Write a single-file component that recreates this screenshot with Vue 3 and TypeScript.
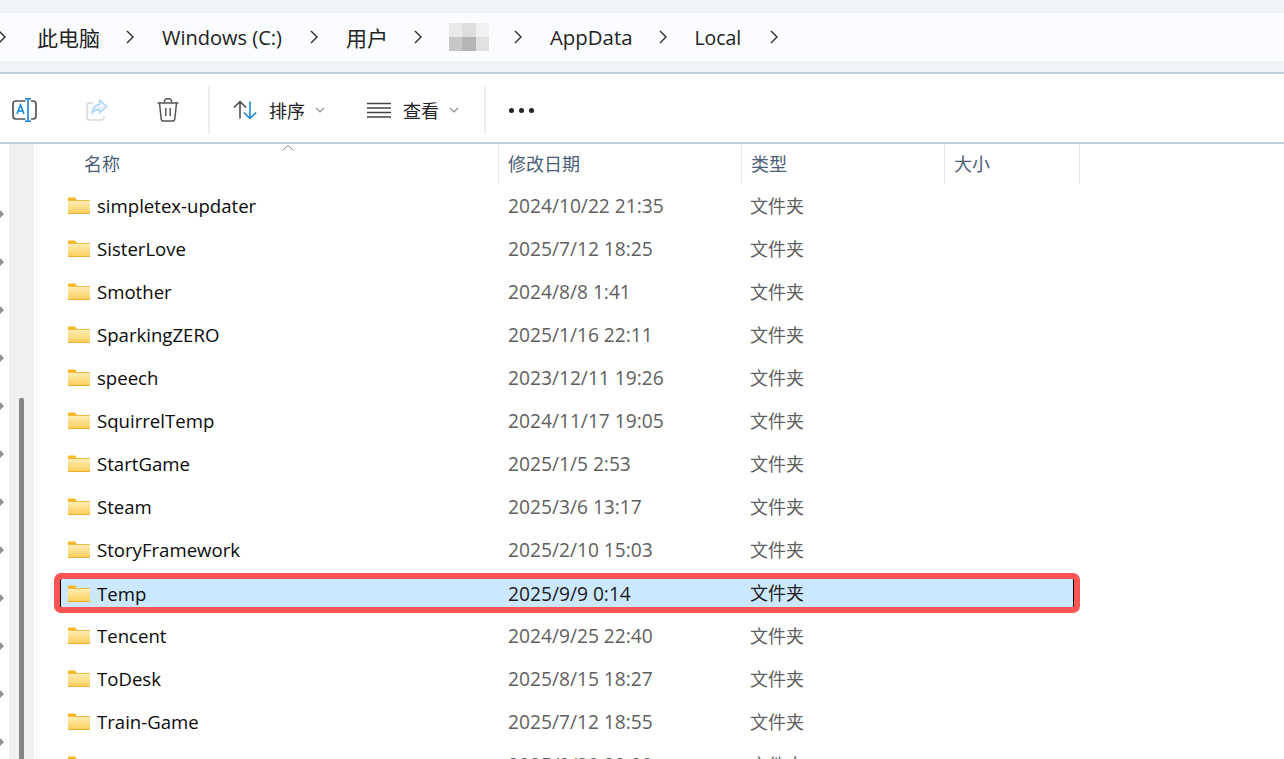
<script setup lang="ts">
interface FileRow {
  name: string
  date: string
  selected?: boolean
}

// last row is cut by the window edge, its name can't be read in the reference
const rows: FileRow[] = [
  { name: 'simpletex-updater', date: '2024/10/22 21:35' },
  { name: 'SisterLove', date: '2025/7/12 18:25' },
  { name: 'Smother', date: '2024/8/8 1:41' },
  { name: 'SparkingZERO', date: '2025/1/16 22:11' },
  { name: 'speech', date: '2023/12/11 19:26' },
  { name: 'SquirrelTemp', date: '2024/11/17 19:05' },
  { name: 'StartGame', date: '2025/1/5 2:53' },
  { name: 'Steam', date: '2025/3/6 13:17' },
  { name: 'StoryFramework', date: '2025/2/10 15:03' },
  { name: 'Temp', date: '2025/9/9 0:14', selected: true },
  { name: 'Tencent', date: '2024/9/25 22:40' },
  { name: 'ToDesk', date: '2025/8/15 18:27' },
  { name: 'Train-Game', date: '2025/7/12 18:55' },
  { name: '', date: '2025/8/28 22:00' }
]

const mosaic: string[] = ['#e9e9e9', '#dedede', '#f1f1f1', '#c8c8c8', '#b5b5b5', '#e1e1e1']
const treeArrows: number[] = [0, 1, 2, 3, 4, 5, 6, 7, 8, 9, 10, 11, 12]
</script>

<template>
  <div class="explorer">
    <div class="address-band">
      <nav class="crumbs">
        <svg class="chev first" viewBox="0 0 8 14"><path d="M1 1l6 6-6 6" /></svg>
        <span class="crumb cjk c-pc">此电脑</span>
        <svg class="chev" viewBox="0 0 8 14"><path d="M1 1l6 6-6 6" /></svg>
        <span class="crumb c-win">Windows (C:)</span>
        <svg class="chev" viewBox="0 0 8 14"><path d="M1 1l6 6-6 6" /></svg>
        <span class="crumb cjk c-users">用户</span>
        <svg class="chev" viewBox="0 0 8 14"><path d="M1 1l6 6-6 6" /></svg>
        <div class="mosaic">
          <i v-for="(c, i) in mosaic" :key="i" :style="{ background: c }"></i>
        </div>
        <svg class="chev" viewBox="0 0 8 14"><path d="M1 1l6 6-6 6" /></svg>
        <span class="crumb c-app">AppData</span>
        <svg class="chev" viewBox="0 0 8 14"><path d="M1 1l6 6-6 6" /></svg>
        <span class="crumb c-local">Local</span>
        <svg class="chev" viewBox="0 0 8 14"><path d="M1 1l6 6-6 6" /></svg>
      </nav>
    </div>

    <div class="toolbar">
      <svg class="tool t-rename" viewBox="0 0 25 24" fill="none">
        <path d="M13.500 3H4a3 3 0 0 0-3 3v12a3 3 0 0 0 3 3h9.500" stroke="#565656" stroke-width="1.700" />
        <path d="M19 3h2a3 3 0 0 1 3 3v12a3 3 0 0 1-3 3h-2" stroke="#565656" stroke-width="1.700" />
        <path d="M16 1v22M13 .8h6M13 23.200h6" stroke="#1583d8" stroke-width="1.600" />
        <path d="M5 16 8.500 7l3.500 9M6.200 13h4.600" stroke="#1583d8" stroke-width="1.600" />
      </svg>
      <svg class="tool t-share" viewBox="0 0 22 22" fill="none">
        <path d="M7 4H3.500A2.500 2.500 0 0 0 1 6.500v12A2.500 2.500 0 0 0 3.500 21h12a2.500 2.500 0 0 0 2.500-2.500V17" stroke="#d8d8d8" stroke-width="1.500" />
        <path d="M13.500 1 21 7.500 13.500 14v-3.500c-3.500 0-5.500 1-7.500 4 .5-5 3-8.500 7.500-9.500z" fill="#e6f3fd" stroke="#a9d4f5" stroke-width="1.300" stroke-linejoin="round" />
      </svg>
      <svg class="tool t-trash" viewBox="0 0 22 24" fill="none" stroke="#565656" stroke-width="1.500">
        <path d="M.5 5h21M7.500 5V3a2.200 2.200 0 0 1 2.200-2.200h2.600A2.200 2.200 0 0 1 14.500 3v2" />
        <path d="M2.500 5l1.700 15.800A2.500 2.500 0 0 0 6.700 23h8.600a2.500 2.500 0 0 0 2.500-2.200L19.500 5" />
        <path d="M8.800 10v8M13.200 10v8" />
      </svg>
      <span class="vsep s-a"></span>
      <svg class="tool t-sort" viewBox="0 0 24 20" fill="none" stroke-width="1.500">
        <path d="M7 18.500V1.500M.8 7.500 7 1.500l6.200 6" stroke="#444" />
        <path d="M17 1.500v17M10.800 12.500l6.200 6 6.200-6" stroke="#1583d8" />
      </svg>
      <span class="tool-label l-sort">排序</span>
      <svg class="caret c-sort" viewBox="0 0 10 6"><path d="M1 1l4 4 4-4" /></svg>
      <svg class="tool t-view" viewBox="0 0 24 16" fill="none" stroke="#444" stroke-width="1.300">
        <path d="M0 1.500h24M0 6h24M0 10.500h24M0 15h24" />
      </svg>
      <span class="tool-label l-view">查看</span>
      <svg class="caret c-view" viewBox="0 0 10 6"><path d="M1 1l4 4 4-4" /></svg>
      <span class="vsep s-b"></span>
      <div class="dots"><i></i><i></i><i></i></div>
    </div>

    <div class="content">
      <aside class="tree">
        <div class="tree-arrows">
          <i v-for="n in treeArrows" :key="n"></i>
        </div>
        <div class="track"><div class="thumb"></div></div>
      </aside>

      <section class="files">
        <header class="col-head">
          <div class="col c-name">名称<svg class="sort-up" viewBox="0 0 12 6"><path d="M0.500 5.500 6 0.500l5.500 5" /></svg></div>
          <div class="col">修改日期</div>
          <div class="col">类型</div>
          <div class="col">大小</div>
        </header>
        <div class="list">
          <div v-for="row in rows" :key="row.date" class="row" :class="{ selected: row.selected }">
            <div class="row-inner">
              <div class="cell-name">
                <svg class="folder" viewBox="0 0 22 17">
                  <path d="M0 1.500A1 1 0 0 1 1 .500h6l2 2.500H0z" fill="#fbb81f" />
                  <path d="M0 3h22v14H0z" fill="#eeaf2e" />
                  <path d="M0 3.800h22V16H0z" fill="url(#fold)" />
                  <defs>
                    <linearGradient id="fold" x1="0" y1="0" x2="0" y2="1">
                      <stop offset="0" stop-color="#ffeeb4" />
                      <stop offset="1" stop-color="#fdd05f" />
                    </linearGradient>
                  </defs>
                </svg>
                <span class="fname">{{ row.name }}</span>
              </div>
              <div class="cell-date">{{ row.date }}</div>
              <div class="cell-type">文件夹</div>
            </div>
          </div>
        </div>
      </section>
    </div>
  </div>
</template>

<style>
html, body {
  margin: 0;
  height: 100%;
  overflow: hidden;
  background: #fff;
}
</style>

<style scoped>
.explorer {
  width: 1284px;
  height: 759px;
  overflow: hidden;
  display: flex;
  flex-direction: column;
  font-family: "Open Sans", "Noto Sans CJK SC", sans-serif;
  color: #1c1c1c;
}

.address-band {
  flex: none;
  box-sizing: border-box;
  padding: 13px 0 11px;
  background: #f0f4f9;
  border-bottom: 2px solid #c2cfdb;
  height: 74px;
}

.crumbs {
  height: 48px;
  background: #fafcff;
  display: flex;
  align-items: center;
  font-size: 20px;
  color: #222;
}

.chev {
  width: 8px;
  height: 14px;
  flex: none;
  fill: none;
  stroke: #2b2b2b;
  stroke-width: 1.400;
}

.chev.first {
  margin-left: -2px;
}

.crumb {
  white-space: nowrap;
}

.cjk {
  font-size: 21px;
}

.c-pc { margin: 0 26px 0 31px; }
.c-win { margin: 0 28px 0 28px; }
.c-users { margin: 0 26px 0 28px; }
.c-app { margin: 0 26px 0 28px; font-size: 20.400px; }
.c-local { margin: 0 29px 0 28px; font-size: 19.400px; }

.mosaic {
  width: 40px;
  height: 28px;
  margin: 0 25px 0 27px;
  display: grid;
  grid-template-columns: repeat(3, 1fr);
  grid-template-rows: repeat(2, 1fr);
  filter: blur(0.300px);
}

.toolbar {
  height: 68px;
  flex: none;
  box-sizing: border-box;
  padding-top: 4px;
  display: flex;
  align-items: center;
  background: #fff;
}

.tool {
  flex: none;
  display: block;
}

.t-rename { width: 25px; height: 24px; margin-left: 12px; }
.t-share { width: 22px; height: 22px; margin-left: 49px; }
.t-trash { width: 22px; height: 24px; margin-left: 49px; }

.vsep {
  width: 2px;
  height: 48px;
  background: #eeeeee;
  flex: none;
}

.s-a { margin-left: 29px; }
.s-b { margin-left: 25px; }

.t-sort { width: 24px; height: 20px; margin-left: 23px; }
.t-view { width: 24px; height: 16px; margin-left: 42px; }

.tool-label {
  font-size: 18px;
  color: #222;
  margin-left: 12px;
}

.caret {
  width: 10px;
  height: 6px;
  margin-left: 10px;
  flex: none;
  fill: none;
  stroke: #8a8a8a;
  stroke-width: 1.100;
}

.dots {
  display: flex;
  gap: 5px;
  margin-left: 23px;
}

.dots i {
  width: 5px;
  height: 5px;
  border-radius: 50%;
  background: #222;
}

.content {
  flex: 1;
  min-height: 0;
  display: flex;
  border-top: 2px solid #c2cfdb;
}

.tree {
  width: 36px;
  flex: none;
  box-sizing: border-box;
  display: flex;
}

.tree-arrows {
  width: 9px;
  flex: none;
  display: flex;
  flex-direction: column;
  gap: 40px;
  padding-top: 66px;
}

.tree-arrows i {
  display: block;
  width: 4px;
  height: 8px;
  flex: none;
  background: #8c9296;
  clip-path: polygon(0 0, 100% 50%, 0 100%);
}

.track {
  width: 25px;
  height: 100%;
  background: #f0f0f0;
  flex: none;
  padding-top: 254px;
  box-sizing: border-box;
  padding-left: 10px;
}

.thumb {
  width: 5px;
  height: 100%;
  background: #858585;
  border-radius: 2px 2px 0 0;
}

.files {
  flex: 1;
  min-width: 0;
  border-left: 1px solid #f2f2f2;
}

.col-head {
  display: grid;
  grid-template-columns: 462px 243px 203px 135px;
  height: 40px;
  font-size: 18px;
  line-height: 1;
  color: #4a6078;
}

.col {
  position: relative;
  display: flex;
  align-items: center;
  padding-left: 9px;
  border-right: 1px solid #e5e5e5;
}

.c-name {
  padding-left: 47px;
}

.sort-up {
  position: absolute;
  left: 245px;
  top: 1px;
  width: 12px;
  height: 6px;
  fill: none;
  stroke: #7c7c7c;
  stroke-width: 1;
}

.list {
  width: 1043px;
}

.row {
  height: 43px;
  padding-left: 17px;
  box-sizing: border-box;
}

.row-inner {
  height: 43px;
  display: grid;
  grid-template-columns: 444px 243px 1fr;
  align-items: center;
  font-size: 19.200px;
  box-sizing: border-box;
}

.row.selected {
  padding-top: 8px;
}

.row.selected .row-inner {
  background: #cce8ff;
  height: 28px;
  margin: 0 6px;
  padding-bottom: 2px;
  grid-template-columns: 438px 243px 1fr;
  box-shadow: inset 1px 0 0 #000, inset -1px 0 0 #000;
  outline: 6px solid #ff5454;
  border-radius: 1px;
}

.cell-name {
  display: flex;
  align-items: center;
  min-width: 0;
  padding-left: 14px;
}

.row.selected .cell-name {
  padding-left: 8px;
}

.folder {
  width: 22px;
  height: 17px;
  flex: none;
}

.fname {
  margin-left: 7px;
  font-size: 18.600px;
  color: #0a0a0a;
  white-space: nowrap;
}

.cell-date,
.cell-type {
  color: #5f5f5f;
  padding-left: 10px;
}

.cell-type {
  font-size: 18px;
  padding-left: 9px;
  padding-bottom: 2px;
}

.row.selected .cell-date,
.row.selected .cell-type {
  color: #1c1c1c;
}
</style>
